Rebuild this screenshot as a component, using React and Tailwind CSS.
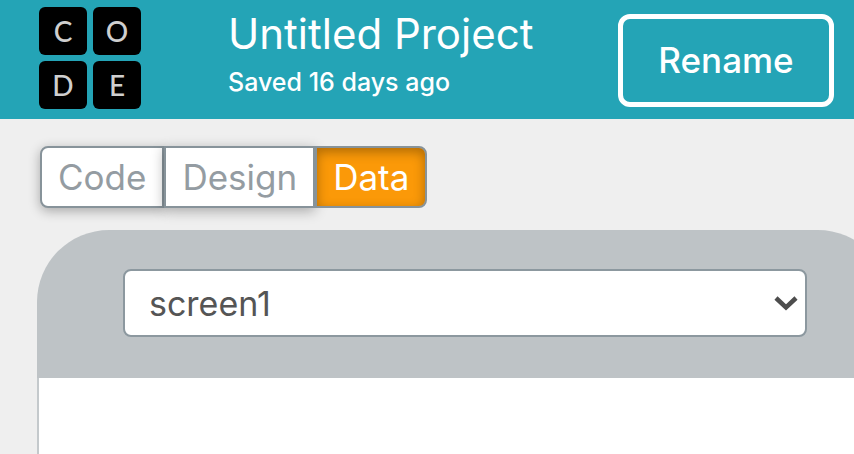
import { useState } from "react";

const TABS = ["Code", "Design", "Data"];

function Logo() {
  return (
    <a href="#home" aria-label="Code home" className="grid shrink-0 grid-cols-2 gap-[6px]">
      {["C", "O", "D", "E"].map((letter) => (
        <span
          key={letter}
          className="flex size-12 items-center justify-center rounded-md bg-black font-['Lato',sans-serif] text-[28px] leading-none font-medium text-[#cfcfcf]"
        >
          {letter}
        </span>
      ))}
    </a>
  );
}

function Header() {
  return (
    <header className="flex items-start bg-[#24a4b6] pt-[7px] pr-5 pb-[10px] pl-[39px] text-white">
      <Logo />
      <div className="ml-[87px] grow pt-[3px] whitespace-nowrap">
        <h1 className="text-[42px] leading-[48px]">Untitled Project</h1>
        <p className="pt-2 text-[25px] leading-8 font-medium">Saved 16 days ago</p>
      </div>
      <button
        type="button"
        className="mt-[7px] h-[93px] w-[216px] shrink-0 rounded-xl border-[5px] border-white text-[35px] font-medium"
      >
        Rename
      </button>
    </header>
  );
}

function ModeTabs() {
  const [active, setActive] = useState("Data");
  return (
    <div className="flex w-fit">
      {TABS.map((tab) => (
        <button
          key={tab}
          type="button"
          aria-pressed={tab === active}
          onClick={() => setActive(tab)}
          className={
            "h-[62px] border-2 border-[#87939a] px-4 text-[35px] first:rounded-l-lg last:rounded-r-lg " +
            (tab === active
              ? "bg-[#fb9908] text-white shadow-[inset_0_4px_12px_rgba(0,0,0,0.3)]"
              : "bg-white text-[#949ca2] shadow-[0_3px_12px_rgba(0,0,0,0.3)]")
          }
        >
          {tab}
        </button>
      ))}
    </div>
  );
}

function ScreenSelect() {
  return (
    <div className="relative w-[684px]">
      <select
        id="screen"
        aria-label="Screen"
        className="h-[68px] w-full appearance-none rounded-lg border-2 border-[#8c989f] bg-white pr-14 pl-6 text-[34px] text-[#555]"
      >
        <option>screen1</option>
      </select>
      <svg
        viewBox="0 0 24 16"
        aria-hidden="true"
        className="pointer-events-none absolute top-[26px] right-[9px] h-4 w-6"
        fill="none"
        stroke="#4d4d4d"
        strokeWidth="4.5"
      >
        <path d="M2 3 L12 12.5 L22 3" />
      </svg>
    </div>
  );
}

export default function App() {
  return (
    <div className="flex min-h-screen flex-col overflow-hidden bg-[#efefef] font-['Inter',sans-serif]">
      <Header />
      <main className="flex grow flex-col pt-[27px] pl-[37px]">
        <div className="pl-[3px]">
          <ModeTabs />
        </div>
        <section className="-mr-9 mt-[22px] flex grow flex-col">
          <div className="rounded-t-[72px] bg-[#bec3c6] pt-[39px] pb-[41px] pl-[86px]">
            <ScreenSelect />
          </div>
          <div className="grow border-x-2 border-[#c4c9cc] bg-white" />
        </section>
      </main>
    </div>
  );
}
